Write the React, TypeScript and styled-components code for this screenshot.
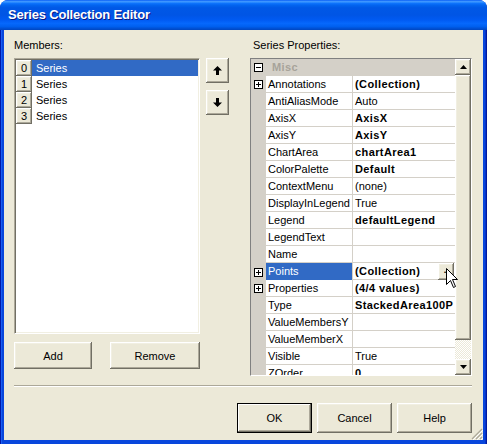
import React from 'react';
import styled, { createGlobalStyle, css } from 'styled-components';

const GlobalStyle = createGlobalStyle`
  html, body { margin: 0; padding: 0; background: #ffffff; }
  body { font-family: "Liberation Sans", Arial, sans-serif; font-size: 11px; color: #000; }
  * { box-sizing: border-box; }
`;

const raised = css`
  background: #ece9d8;
  box-shadow: inset -1px -1px #716f64, inset 1px 1px #ffffff, inset -2px -2px #aca899, inset 2px 2px #f1efe2;
`;

const Window = styled.div`
  width: 487px;
  height: 444px;
  display: flex;
  flex-direction: column;
  border-radius: 8px 8px 0 0;
  overflow: hidden;
  background: linear-gradient(
    to right,
    #0019a8 0 1px,
    #1a5ef2 1px 2px,
    #0846dc 2px calc(100% - 2px),
    #0733c7 calc(100% - 2px) calc(100% - 1px),
    #001a9e calc(100% - 1px)
  );
`;

const TitleBar = styled.div`
  height: 30px;
  flex: none;
  display: flex;
  align-items: center;
  padding: 0 0 1px 8px;
  background: linear-gradient(
    to bottom,
    #0a5ef6 0%,
    #3d95ff 5%,
    #2a8bff 8%,
    #0a70fb 12%,
    #0263ee 18%,
    #0058e6 26%,
    #0055e5 50%,
    #005af2 66%,
    #0668fc 78%,
    #0060f0 88%,
    #0052d8 94%,
    #0046c0 100%
  );
`;

const Title = styled.span`
  color: #ffffff;
  font-family: "Liberation Sans", Arial, sans-serif;
  font-weight: bold;
  font-size: 13px;
  text-shadow: 1px 1px #0a1883;
  letter-spacing: -0.2px;
`;

const Body = styled.div`
  flex: 1;
  margin: 0 4px 4px 4px;
  background: #ece9d8;
  padding: 9px 11px 0 10px;
  display: flex;
  flex-direction: column;
  position: relative;
`;

const MainRow = styled.div`
  display: flex;
  align-items: flex-start;
`;

const Column = styled.div<{ $width: number; $ml?: number }>`
  width: ${(p) => p.$width}px;
  margin-left: ${(p) => p.$ml ?? 0}px;
  display: flex;
  flex-direction: column;
`;

const Label = styled.div<{ $pl?: number }>`
  height: 13px;
  line-height: 13px;
  margin-bottom: 6px;
  padding-left: ${(p) => p.$pl ?? 0}px;
`;

const ListBox = styled.div`
  height: 276px;
  background: #ffffff;
  border: 1px solid;
  border-color: #aca899 #ffffff #ffffff #aca899;
  box-shadow: inset 1px 1px #716f64, inset -1px -1px #f1efe2;
  padding: 1px 1px;
`;

const ListRow = styled.div`
  display: flex;
  height: 16px;
`;

const IndexCell = styled.div`
  ${raised};
  width: 16px;
  height: 16px;
  flex: none;
  display: flex;
  align-items: center;
  justify-content: center;
  font-size: 11px;
`;

const ItemText = styled.div<{ $selected?: boolean }>`
  flex: 1;
  height: 16px;
  line-height: 16px;
  padding-left: 4px;
  background: ${(p) => (p.$selected ? '#316ac5' : 'transparent')};
  color: ${(p) => (p.$selected ? '#ffffff' : '#000000')};
`;

const ButtonRow = styled.div`
  display: flex;
  justify-content: space-between;
  margin-top: 8px;
`;

const Button = styled.button<{ $w: number; $h: number; $default?: boolean }>`
  ${raised};
  width: ${(p) => p.$w}px;
  height: ${(p) => p.$h}px;
  border: none;
  padding: 0;
  font-family: "Liberation Sans", Arial, sans-serif;
  font-size: 11px;
  color: #000;
  display: flex;
  align-items: center;
  justify-content: center;
  ${(p) =>
    p.$default &&
    css`
      box-shadow: inset 0 0 0 1px #000000, inset -2px -2px #716f64, inset 2px 2px #ffffff,
        inset -3px -3px #aca899;
    `}
`;

const ArrowColumn = styled.div`
  margin-left: 6px;
  margin-top: 19px;
  display: flex;
  flex-direction: column;
  gap: 7px;
`;

const Grid = styled.div`
  height: 318px;
  border: 1px solid;
  border-color: #808080 #ffffff #ffffff #808080;
  display: flex;
  overflow: hidden;
  background: #ffffff;
`;

const GridRows = styled.div`
  flex: 1;
  display: flex;
  flex-direction: column;
  min-width: 0;
`;

const PropRow = styled.div<{ $category?: boolean }>`
  height: 17px;
  flex: none;
  display: grid;
  grid-template-columns: 15px 87px 1fr;
  border-bottom: 1px solid #d4d0c8;
  background: ${(p) => (p.$category ? '#d4d0c8' : '#ffffff')};
`;

const Gutter = styled.div`
  background: #d4d0c8;
  display: flex;
  align-items: center;
  justify-content: center;
  margin-bottom: -1px;
`;

const ExpandBox = styled.div`
  width: 9px;
  height: 9px;
  border: 1px solid #000;
  background: #ffffff;
  position: relative;
  &::before {
    content: '';
    position: absolute;
    left: 1px;
    top: 3px;
    width: 5px;
    height: 1px;
    background: #000;
  }
`;

const PlusBox = styled(ExpandBox)`
  &::after {
    content: '';
    position: absolute;
    left: 3px;
    top: 1px;
    width: 1px;
    height: 5px;
    background: #000;
  }
`;

const CategoryName = styled.div`
  grid-column: 2 / 4;
  line-height: 16px;
  padding-left: 6px;
  font-weight: bold;
  letter-spacing: 0.4px;
  color: #a7a39a;
`;

const NameCell = styled.div<{ $selected?: boolean }>`
  line-height: 16px;
  padding-left: 2px;
  border-right: 1px solid #d4d0c8;
  white-space: nowrap;
  overflow: hidden;
  background: ${(p) => (p.$selected ? '#316ac5' : 'transparent')};
  color: ${(p) => (p.$selected ? '#ffffff' : '#000000')};
`;

const ValueCell = styled.div`
  display: flex;
  min-width: 0;
`;

const ValueText = styled.div<{ $bold?: boolean }>`
  flex: 1;
  line-height: 16px;
  padding-left: 2px;
  white-space: nowrap;
  overflow: hidden;
  font-weight: ${(p) => (p.$bold ? 'bold' : 'normal')};
  letter-spacing: ${(p) => (p.$bold ? '0.4px' : '0')};
`;

const Ellipsis = styled.div`
  ${raised};
  width: 16px;
  height: 17px;
  margin-right: 1px;
  position: relative;
  font-size: 9px;
  font-weight: bold;
  line-height: 14px;
  text-align: center;
  letter-spacing: -1px;
`;

const Cursor = styled.svg`
  position: absolute;
  left: 8px;
  top: 5px;
  z-index: 10;
  overflow: visible;
`;

const ScrollBar = styled.div`
  width: 16px;
  flex: none;
  display: flex;
  flex-direction: column;
`;

const ScrollButton = styled.div`
  ${raised};
  height: 16px;
  flex: none;
  display: flex;
  align-items: center;
  justify-content: center;
`;

const Thumb = styled.div`
  ${raised};
  height: 265px;
  flex: none;
`;

const Track = styled.div`
  flex: 1;
  background: repeating-conic-gradient(#ffffff 0 25%, #ece9d8 0 50%) 0 0 / 2px 2px;
`;

const Separator = styled.div`
  margin-top: 9px;
  height: 2px;
  border-top: 1px solid #aca899;
  border-bottom: 1px solid #ffffff;
`;

const Footer = styled.div`
  margin-top: 16px;
  display: flex;
  justify-content: flex-end;
  gap: 5px;
`;

const Grip = styled.svg`
  position: absolute;
  right: 0;
  bottom: 0;
`;

const ArrowIcon = ({ down }: { down?: boolean }) => (
  <svg width="9" height="9" viewBox="0 0 9 9" style={{ transform: down ? 'rotate(180deg)' : undefined }}>
    <polygon points="4.5,0 9,4.5 6,4.5 6,9 3,9 3,4.5 0,4.5" fill="#000" />
  </svg>
);

const Tri = ({ down }: { down?: boolean }) => (
  <svg width="7" height="4" viewBox="0 0 7 4">
    <polygon points={down ? '0,0 7,0 3.5,4' : '3.5,0 7,4 0,4'} fill="#000" />
  </svg>
);

type Prop = { name: string; value?: string; bold?: boolean; expand?: boolean; selected?: boolean; button?: boolean };

const props: Prop[] = [
  { name: 'Annotations', value: '(Collection)', bold: true, expand: true },
  { name: 'AntiAliasMode', value: 'Auto' },
  { name: 'AxisX', value: 'AxisX', bold: true },
  { name: 'AxisY', value: 'AxisY', bold: true },
  { name: 'ChartArea', value: 'chartArea1', bold: true },
  { name: 'ColorPalette', value: 'Default', bold: true },
  { name: 'ContextMenu', value: '(none)' },
  { name: 'DisplayInLegend', value: 'True' },
  { name: 'Legend', value: 'defaultLegend', bold: true },
  { name: 'LegendText' },
  { name: 'Name' },
  { name: 'Points', value: '(Collection)', bold: true, expand: true, selected: true, button: true },
  { name: 'Properties', value: '(4/4 values)', bold: true, expand: true },
  { name: 'Type', value: 'StackedArea100P', bold: true },
  { name: 'ValueMembersY' },
  { name: 'ValueMemberX' },
  { name: 'Visible', value: 'True' },
  { name: 'ZOrder', value: '0', bold: true },
];

export default function App() {
  return (
    <>
      <GlobalStyle />
      <Window>
        <TitleBar>
          <Title>Series Collection Editor</Title>
        </TitleBar>
        <Body>
          <MainRow>
            <Column $width={186}>
              <Label>Members:</Label>
              <ListBox>
                {[0, 1, 2, 3].map((i) => (
                  <ListRow key={i}>
                    <IndexCell>{i}</IndexCell>
                    <ItemText $selected={i === 0}>Series</ItemText>
                  </ListRow>
                ))}
              </ListBox>
              <ButtonRow>
                <Button $w={78} $h={27}>Add</Button>
                <Button $w={90} $h={27}>Remove</Button>
              </ButtonRow>
            </Column>
            <ArrowColumn>
              <Button $w={23} $h={25}>
                <ArrowIcon />
              </Button>
              <Button $w={23} $h={25}>
                <ArrowIcon down />
              </Button>
            </ArrowColumn>
            <Column $width={222} $ml={21}>
              <Label $pl={3}>Series Properties:</Label>
              <Grid>
                <GridRows>
                  <PropRow $category>
                    <Gutter>
                      <ExpandBox />
                    </Gutter>
                    <CategoryName>Misc</CategoryName>
                  </PropRow>
                  {props.map((p) => (
                    <PropRow key={p.name}>
                      <Gutter>{p.expand && <PlusBox />}</Gutter>
                      <NameCell $selected={p.selected}>{p.name}</NameCell>
                      <ValueCell>
                        <ValueText $bold={p.bold}>{p.value ?? ''}</ValueText>
                        {p.button && (
                          <Ellipsis>
                            ...
                            <Cursor width="12" height="20" viewBox="0 0 12 20">
                              <path
                                d="M0.5,0.5 L0.5,16.5 L4.5,12.5 L7.5,19.5 L9.5,18.5 L6.5,11.5 L11.5,11.5 Z"
                                fill="#ffffff"
                                stroke="#000000"
                                strokeWidth="1"
                              />
                            </Cursor>
                          </Ellipsis>
                        )}
                      </ValueCell>
                    </PropRow>
                  ))}
                </GridRows>
                <ScrollBar>
                  <ScrollButton>
                    <Tri />
                  </ScrollButton>
                  <Thumb />
                  <Track />
                  <ScrollButton>
                    <Tri down />
                  </ScrollButton>
                </ScrollBar>
              </Grid>
            </Column>
          </MainRow>
          <Separator />
          <Footer>
            <Button $w={75} $h={30} $default>OK</Button>
            <Button $w={75} $h={30}>Cancel</Button>
            <Button $w={75} $h={30}>Help</Button>
          </Footer>
          <Grip width="12" height="12" viewBox="0 0 12 12">
            <path d="M11,1 L1,11 M11,5 L5,11 M11,9 L9,11" stroke="#aca899" strokeWidth="1.2" />
            <path d="M12,2 L2,12 M12,6 L6,12 M12,10 L10,12" stroke="#ffffff" strokeWidth="1" />
          </Grip>
        </Body>
      </Window>
    </>
  );
}
